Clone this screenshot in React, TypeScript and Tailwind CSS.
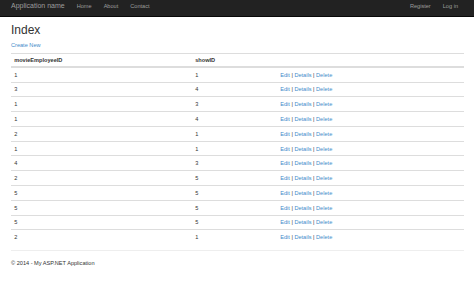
import React from "react";

const rows: [number, number][] = [
  [1, 1],
  [3, 4],
  [1, 3],
  [1, 4],
  [2, 1],
  [1, 1],
  [4, 3],
  [2, 5],
  [5, 5],
  [5, 5],
  [5, 5],
  [2, 1],
];

export default function App() {
  return (
    <div
      className="min-h-[282px] bg-white text-[#333]"
      style={{ fontFamily: '"Liberation Sans", Arial, sans-serif' }}
    >
      <nav className="flex h-[17px] items-start border-b border-[#080808] bg-[#222] pl-[5px] pr-[10px]">
        <a className="h-[12px] px-[6px] text-[7px] leading-[12px] text-[#9d9d9d]">Application name</a>
        <ul className="flex">
          <li className="h-[12px] px-[6px] text-[5.6px] leading-[12px] text-[#9d9d9d]">Home</li>
          <li className="h-[12px] px-[6px] text-[5.6px] leading-[12px] text-[#9d9d9d]">About</li>
          <li className="h-[12px] px-[6px] text-[5.6px] leading-[12px] text-[#9d9d9d]">Contact</li>
        </ul>
        <ul className="ml-auto flex">
          <li className="h-[12px] px-[6px] text-[5.6px] leading-[12px] text-[#9d9d9d]">Register</li>
          <li className="h-[12px] px-[6px] text-[5.6px] leading-[12px] text-[#9d9d9d]">Log in</li>
        </ul>
      </nav>

      <main className="pl-[11px] pr-[10px]">
        <h2 className="mb-[4px] mt-[7.2px] text-[12px] font-normal leading-[13.2px]">Index</h2>
        <p className="mb-[3.4px] text-[5.6px] leading-[8px]">
          <a className="text-[#428bca]">Create New</a>
        </p>
        <table className="mb-[6px] w-full border-collapse text-[5.6px] leading-[8px]">
          <thead>
            <tr>
              <th className="w-[181px] border-b-2 border-t border-b-[#ddd] border-t-[#ddd] px-[3.2px] py-[2px] text-left font-bold">
                movieEmployeeID
              </th>
              <th className="w-[85px] border-b-2 border-t border-b-[#ddd] border-t-[#ddd] px-[3.2px] py-[2px] text-left font-bold">
                showID
              </th>
              <th className="border-b-2 border-t border-b-[#ddd] border-t-[#ddd] px-[3.2px] py-[2px] text-left"></th>
            </tr>
          </thead>
          <tbody>
            {rows.map(([a, b], i) => (
              <tr key={i}>
                <td className="border-t border-[#ddd] px-[3.2px] py-[2.9px]">{a}</td>
                <td className="border-t border-[#ddd] px-[3.2px] py-[2.9px]">{b}</td>
                <td className="border-t border-[#ddd] px-[3.2px] py-[2.9px]">
                  <a className="text-[#428bca]">Edit</a> | <a className="text-[#428bca]">Details</a> |{" "}
                  <a className="text-[#428bca]">Delete</a>
                </td>
              </tr>
            ))}
          </tbody>
        </table>
        <hr className="mb-[8px] mt-0 border-t border-[#eee]" />
        <footer>
          <p className="text-[5.6px] leading-[8px]">© 2014 - My ASP.NET Application</p>
        </footer>
      </main>
    </div>
  );
}
